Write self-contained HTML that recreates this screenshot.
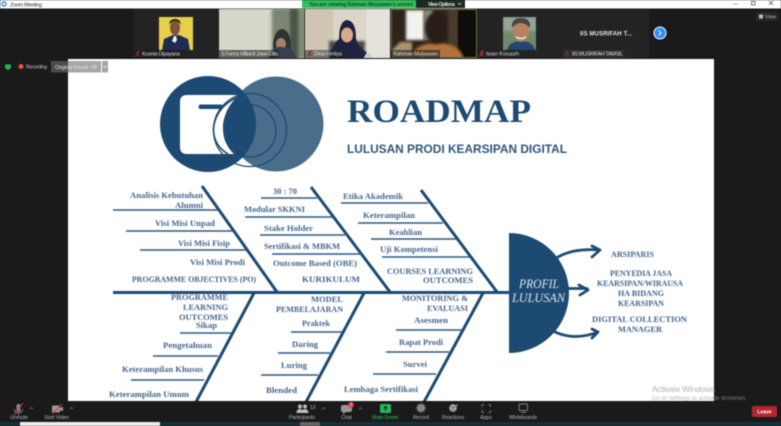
<!DOCTYPE html>
<html><head><meta charset="utf-8"><title>Zoom Meeting</title>
<style>html,body{margin:0;padding:0;background:#1a1a1a;width:781px;height:426px;overflow:hidden}svg{display:block;filter:blur(.45px)}
.s{font-family:"Liberation Serif",serif;font-weight:bold;font-size:8px;fill:#44658a}
.u{font-family:"Liberation Sans",sans-serif;fill:#b8b8b8;font-size:5px}
.n{font-family:"Liberation Sans",sans-serif;fill:#dcdcdc;font-size:5.5px}
.b{stroke:#1d4a72;stroke-width:3;fill:none}.r{stroke:#2d5a80;stroke-width:1.5;fill:none}
.a{stroke:#1d4a72;stroke-width:2.8;fill:none;stroke-linecap:round;stroke-linejoin:round}
</style></head><body>
<svg width="781" height="426" viewBox="0 0 781 426" xmlns="http://www.w3.org/2000/svg">
<defs><filter id="bl" x="-20%" y="-20%" width="140%" height="140%"><feGaussianBlur stdDeviation="1.4"/></filter>
<clipPath id="c1"><rect x="159" y="17" width="34" height="33"/></clipPath>
<clipPath id="c2"><rect x="219" y="9" width="85" height="49"/></clipPath>
<clipPath id="c3"><rect x="305" y="9" width="85" height="49"/></clipPath>
<clipPath id="c4"><rect x="391" y="9" width="85" height="49"/></clipPath>
<clipPath id="c5"><rect x="503" y="17" width="33" height="33"/></clipPath>
</defs>
<rect width="781" height="426" fill="#1a1a1a"/>
<!-- title bar -->
<rect width="781" height="8.5" fill="#fff"/>
<circle cx="4" cy="4" r="2.8" fill="#2d8cff"/><rect x="2.5" y="3" width="3" height="2" fill="#fff"/>
<text x="10" y="6.3" font-family="Liberation Sans" font-size="5.5" fill="#333" textLength="32">Zoom Meeting</text>
<rect x="302" y="0" width="114" height="8" fill="#2fc05c"/>
<text x="309" y="6" font-family="Liberation Sans" font-weight="bold" font-size="5" fill="#0e4a22" textLength="104">You are viewing Rahman Mulyawan's screen</text>
<rect x="416" y="0" width="49" height="8" fill="#1d2a24"/>
<text x="428" y="5.8" font-family="Liberation Sans" font-weight="bold" font-size="5" fill="#e4e4e4" textLength="27">View Options</text>
<path d="M458 3l1.5 1.6L461 3" stroke="#ddd" fill="none" stroke-width=".7"/>
<path d="M733 4h5" stroke="#888" stroke-width=".7"/><rect x="751.5" y="1.5" width="3.5" height="3.5" fill="none" stroke="#555" stroke-width=".8"/><path d="M769 1l4 4M773 1l-4 4" stroke="#444" stroke-width=".7"/>
<!-- thumbs -->
<rect x="133" y="9" width="516" height="49" fill="#232323"/>
<rect x="159" y="17" width="34" height="33" fill="#e6d04c"/>
<g clip-path="url(#c1)"><path d="M162 50l2-11 9-4h6l9 4 2 11z" fill="#1e2c52"/><ellipse cx="175" cy="28" rx="5" ry="7" fill="#7e5636"/><path d="M169 25q6-8 12 0l-1-4q-5-4-10 0z" fill="#2a2320"/><path d="M174 36l-2 5 3 2 2-3-1-4z" fill="#eee"/></g>
<g clip-path="url(#c2)"><rect x="219" y="9" width="85" height="49" fill="#c8ccbe"/><rect x="219" y="9" width="50" height="49" fill="#d6d8cc" filter="url(#bl)"/><path d="M272 9h32v49h-32z" fill="#7a8672" filter="url(#bl)"/><path d="M290 9h8v50h-8z" fill="#4a5548" filter="url(#bl)"/><ellipse cx="282" cy="46" rx="9" ry="17" fill="#2e3436"/><ellipse cx="281" cy="44" rx="5" ry="6" fill="#a38066"/><path d="M268 60q3-14 14-13 12 0 15 13z" fill="#3a4050"/></g>
<g clip-path="url(#c3)"><rect x="305" y="9" width="85" height="49" fill="#dcd6c8"/><rect x="305" y="9" width="28" height="49" fill="#cfc5b2" filter="url(#bl)"/><rect x="366" y="9" width="24" height="49" fill="#e4e2da"/><rect x="329" y="41" width="36" height="17" fill="#4c4c50" filter="url(#bl)"/><path d="M329 59q3-14 10-20 0-18 8-19 9 1 9 18 1 8 13 16l4 6z" fill="#1f2340"/><ellipse cx="347" cy="35" rx="6" ry="7.5" fill="#d8ab8c"/><path d="M367 52l6 7h-10z" fill="#c8ccd8"/></g>
<g clip-path="url(#c4)"><rect x="391" y="9" width="85" height="49" fill="#2d241c"/><rect x="406" y="10" width="18" height="30" fill="#f2f3ee" filter="url(#bl)"/><rect x="424" y="10" width="9" height="30" fill="#8a8a80" filter="url(#bl)"/><rect x="448" y="9" width="10" height="49" fill="#4a3c2c" filter="url(#bl)"/><rect x="458" y="9" width="18" height="49" fill="#0f0c0a"/><path d="M392 50l8-8h12v16h-20z" fill="#a89468" filter="url(#bl)"/><path d="M410 59q4-16 26-16 24 0 28 16z" fill="#b4713a" filter="url(#bl)"/><ellipse cx="436" cy="28" rx="11" ry="16" fill="#2c1e16" filter="url(#bl)"/></g>
<rect x="391.5" y="9.5" width="85" height="48" fill="none" stroke="#67713c" stroke-width="1"/>
<rect x="503" y="17" width="33" height="33" fill="#6f8a6a"/>
<g clip-path="url(#c5)"><rect x="503" y="17" width="33" height="14" fill="#93a49a" filter="url(#bl)"/><path d="M507 50q2-8 12-9h4q10 1 12 9z" fill="#27466e"/><ellipse cx="521" cy="31" rx="8" ry="11" fill="#b5835f"/><path d="M512 28q-1-10 9-10t9 10q-4-5-9-5t-9 5z" fill="#4c4540"/><path d="M516 37q5 3 10 0" stroke="#eee" stroke-width="1.4" fill="none"/></g>
<text x="606" y="35.5" text-anchor="middle" font-family="Liberation Sans" font-weight="bold" font-size="6" fill="#e6e6e6" textLength="52">IIS MUSRIFAH T...</text>
<circle cx="660" cy="33" r="6" fill="#2d8cff" stroke="#fff" stroke-width="1"/><path d="M658.6 30.5l2.5 2.5-2.5 2.5" stroke="#fff" stroke-width="1" fill="none"/>
<!-- name tags -->
<g><path d="M137 51l2 5M139.5 50.5l-4 6" stroke="#d33" stroke-width="1"/><rect x="135" y="50" width="47" height="8" fill="#111" opacity=".3"/><text class="n" x="142" y="55.5" textLength="38">Kusnia Dipayana</text>
<rect x="219" y="50" width="60" height="8" fill="#222" opacity=".65"/><text class="n" x="221" y="55.5" textLength="57">S Fanny Miliardi Jatari Elita</text>
<path d="M309 51l2 5M311.5 50.5l-4 6" stroke="#d33" stroke-width="1"/><rect x="305" y="50" width="40" height="8" fill="#222" opacity=".5"/><text class="n" x="314" y="55.5" textLength="28">Dina Fertiya</text>
<rect x="391" y="50" width="49" height="8" fill="#222" opacity=".65"/><text class="n" x="393" y="55.5" textLength="45">Rahman Mulyawan</text>
<path d="M481 51l2 5M483.5 50.5l-4 6" stroke="#d33" stroke-width="1"/><text class="n" x="486" y="55.5" textLength="33">Iwan Kosasih</text>
<path d="M566 51l2 5M568.5 50.5l-4 6" stroke="#d33" stroke-width="1"/><rect x="563" y="50" width="61" height="8" fill="#333" opacity=".6"/><text class="n" x="572" y="55.5" textLength="51">IIS MUSRIFAH TAMSIL</text></g>
<rect x="756" y="12" width="22" height="9" fill="#262626" rx="1"/><rect x="759" y="14.5" width="4" height="4" fill="#bbb"/><text x="765" y="18.5" font-family="Liberation Sans" font-size="5" fill="#bbb">View</text>
<!-- slide -->
<rect x="68" y="59" width="646" height="342" fill="#fff"/>
<!-- recording -->
<path d="M8 64l3 1v2q0 2-3 3-3-1-3-3v-2z" fill="#27b04e"/>
<circle cx="21" cy="66.5" r="2.5" fill="#e8544a"/><text x="26" y="68.5" font-family="Liberation Sans" font-size="5" fill="#c4c4c4" textLength="21">Recording</text>
<rect x="51" y="61" width="17" height="11.5" fill="#4c4c4c"/><rect x="68" y="61" width="33" height="11.5" fill="#a6a6a6"/><rect x="102" y="61" width="6" height="11.5" fill="#a6a6a6"/>
<text x="55" y="68.8" font-family="Liberation Sans" font-size="5.2" fill="#e4e4e4" textLength="42">Original Sound: Off</text>
<path d="M103.5 66l1.5 1.5 1.5-1.5" stroke="#fff" stroke-width=".6" fill="none"/>
<!-- logo -->
<circle cx="276" cy="124" r="47.5" fill="#4a6d8c"/>
<circle cx="208" cy="124" r="48" fill="#1d4a72"/>
<path d="M187 95H240Q226 105 223 124Q222 143 234 154H187Q180 154 180 147V102Q180 95 187 95Z" fill="#fff"/>
<path d="M201 104.500H222V109H201Q198.500 109 198.500 106.800T201 104.500Z" fill="#1d4a72"/>
<path d="M240 96Q216 106 213.500 128Q213 145 228 154" fill="none" stroke="#1d4a72" stroke-width="1.600"/>
<circle cx="250" cy="130" r="36.500" fill="none" stroke="#1d4a72" stroke-width="1.300"/>
<circle cx="250" cy="131" r="26" fill="none" stroke="#1d4a72" stroke-width="1.300"/>
<text x="347" y="122" font-family="Liberation Serif" font-weight="bold" font-size="33" fill="#1d4a72" textLength="184" lengthAdjust="spacingAndGlyphs">ROADMAP</text>
<text x="347" y="153" font-family="Liberation Sans" font-weight="bold" font-size="12" fill="#2e5578" textLength="220" lengthAdjust="spacingAndGlyphs">LULUSAN PRODI KEARSIPAN DIGITAL</text>
<!-- fishbone -->
<path class="b" d="M113 292.500H510"/>
<path class="b" d="M202 186L277 292M311 187L390 292M421 190L497 292M254 293L196 402M364 293L306 402M483 293L424 402"/>
<path class="r" d="M113 210H218M126 231H232M140 250H246M261 198H317M245 217H333M260 235H345M272 254H363M341 203H428M358 223H443M371 239H456M382 257H470M180 333H231M153 356H218M131 380H204M291 332H342M278 353H330M261 375H318M396 330H462M386 352H449M373 374H436"/>
<g class="s">
<text x="130" y="198" textLength="73" lengthAdjust="spacingAndGlyphs">Analisis Kebutuhan</text><text x="175" y="208" textLength="28" lengthAdjust="spacingAndGlyphs">Alumni</text>
<text x="155" y="226" textLength="60" lengthAdjust="spacingAndGlyphs">Visi Misi Unpad</text><text x="178" y="246" textLength="52" lengthAdjust="spacingAndGlyphs">Visi Misi Fisip</text><text x="190" y="265" textLength="55" lengthAdjust="spacingAndGlyphs">Visi Misi Prodi</text>
<text x="132" y="282" textLength="124" lengthAdjust="spacingAndGlyphs">PROGRAMME OBJECTIVES (PO)</text>
<text x="273" y="194" textLength="24" lengthAdjust="spacingAndGlyphs">30 : 70</text><text x="244" y="212" textLength="61" lengthAdjust="spacingAndGlyphs">Modular SKKNI</text><text x="264" y="231" textLength="49" lengthAdjust="spacingAndGlyphs">Stake Holder</text><text x="264" y="249" textLength="76" lengthAdjust="spacingAndGlyphs">Sertifikasi &amp; MBKM</text><text x="273" y="266" textLength="84" lengthAdjust="spacingAndGlyphs">Outcome Based (OBE)</text><text x="302" y="282" textLength="58" lengthAdjust="spacingAndGlyphs">KURIKULUM</text>
<text x="343" y="199" textLength="60" lengthAdjust="spacingAndGlyphs">Etika Akademik</text><text x="363" y="218" textLength="52" lengthAdjust="spacingAndGlyphs">Keterampilan</text><text x="389" y="235" textLength="33" lengthAdjust="spacingAndGlyphs">Keahlian</text><text x="380" y="252" textLength="58" lengthAdjust="spacingAndGlyphs">Uji Kompetensi</text><text x="387" y="274" textLength="86" lengthAdjust="spacingAndGlyphs">COURSES LEARNING</text><text x="423" y="283" textLength="50" lengthAdjust="spacingAndGlyphs">OUTCOMES</text>
<text x="171" y="300" textLength="57" lengthAdjust="spacingAndGlyphs">PROGRAMME</text><text x="183" y="310" textLength="45" lengthAdjust="spacingAndGlyphs">LEARNING</text><text x="179" y="320" textLength="49" lengthAdjust="spacingAndGlyphs">OUTCOMES</text><text x="196" y="328" textLength="21" lengthAdjust="spacingAndGlyphs">Sikap</text><text x="163" y="348" textLength="49" lengthAdjust="spacingAndGlyphs">Pengetahuan</text><text x="122" y="372" textLength="81" lengthAdjust="spacingAndGlyphs">Keterampilan Khusus</text><text x="109" y="397" textLength="80" lengthAdjust="spacingAndGlyphs">Keterampilan Umum</text>
<text x="311" y="302" textLength="32" lengthAdjust="spacingAndGlyphs">MODEL</text><text x="276" y="312" textLength="67" lengthAdjust="spacingAndGlyphs">PEMBELAJARAN</text><text x="302" y="326" textLength="28" lengthAdjust="spacingAndGlyphs">Praktek</text><text x="292" y="347" textLength="26" lengthAdjust="spacingAndGlyphs">Daring</text><text x="281" y="368" textLength="26" lengthAdjust="spacingAndGlyphs">Luring</text><text x="266" y="393" textLength="31" lengthAdjust="spacingAndGlyphs">Blended</text>
<text x="402" y="301" textLength="66" lengthAdjust="spacingAndGlyphs">MONITORING &amp;</text><text x="427" y="311" textLength="41" lengthAdjust="spacingAndGlyphs">EVALUASI</text><text x="414" y="323" textLength="34" lengthAdjust="spacingAndGlyphs">Asesmen</text><text x="399" y="345" textLength="44" lengthAdjust="spacingAndGlyphs">Rapat Prodi</text><text x="403" y="367" textLength="24" lengthAdjust="spacingAndGlyphs">Survei</text><text x="344" y="392" textLength="74" lengthAdjust="spacingAndGlyphs">Lembaga Sertifikasi</text>
<text x="611" y="257" textLength="43" lengthAdjust="spacingAndGlyphs">ARSIPARIS</text><text x="610" y="276" textLength="62" lengthAdjust="spacingAndGlyphs">PENYEDIA JASA</text><text x="597" y="286" textLength="86" lengthAdjust="spacingAndGlyphs">KEARSIPAN/WIRAUSA</text><text x="618" y="296" textLength="46" lengthAdjust="spacingAndGlyphs">HA BIDANG</text><text x="618" y="306" textLength="46" lengthAdjust="spacingAndGlyphs">KEARSIPAN</text><text x="592" y="322" textLength="95" lengthAdjust="spacingAndGlyphs">DIGITAL COLLECTION</text><text x="618" y="332" textLength="44" lengthAdjust="spacingAndGlyphs">MANAGER</text>
</g>
<path d="M509 233A60 60 0 0 1 509 353Z" fill="#1d4a72"/>
<text x="519" y="288" font-family="Liberation Serif" font-style="italic" font-size="12.5" fill="#dfe6ec" textLength="40" lengthAdjust="spacingAndGlyphs">PROFIL</text>
<text x="512" y="302" font-family="Liberation Serif" font-style="italic" font-size="12.5" fill="#dfe6ec" textLength="53" lengthAdjust="spacingAndGlyphs">LULUSAN</text>
<path class="a" d="M558 257Q574 248 599 250M592 246L600 250L592 257"/>
<path class="a" d="M565 288.500H587M579 285L588 290L580 295"/>
<path class="a" d="M555 332Q575 341 598 332M592 329L598 332L592 338"/>
<!-- activate -->
<text x="652" y="392" font-family="Liberation Sans" font-size="8.5" fill="#9a9a9a" opacity=".75" textLength="63">Activate Windows</text>
<text x="652" y="400" font-family="Liberation Sans" font-size="6" fill="#9a9a9a" opacity=".75" textLength="95">Go to Settings to activate Windows.</text>
<!-- toolbar -->
<rect x="0" y="401" width="781" height="21" fill="#1a1a1a"/>
<rect x="0" y="422" width="781" height="4" fill="#14303a"/><rect x="20" y="422" width="140" height="4" fill="#eee"/><rect x="300" y="422" width="20" height="4" fill="#666"/>
<rect x="16.5" y="404" width="4" height="8" rx="2" fill="#888"/><path d="M14.5 409q0 4 4 4t4-4M18.5 413v2" stroke="#888" fill="none" stroke-width=".8"/><path d="M14 415l9-12" stroke="#d6333a" stroke-width="1"/>
<text class="u" x="19" y="419" text-anchor="middle">Unmute</text><path d="M30 409l1.5-1.5L33 409" stroke="#888" fill="none" stroke-width=".6"/>
<rect x="52" y="405.5" width="8" height="7" rx="1" fill="#999"/><path d="M60 408l3-1.5v5l-3-1.500z" fill="#999"/><path d="M52 414l10-10" stroke="#d6333a" stroke-width="1"/>
<text class="u" x="56.5" y="419" text-anchor="middle">Start Video</text><path d="M70 409l1.5-1.5L73 409" stroke="#888" fill="none" stroke-width=".6"/>
<circle cx="300" cy="406.5" r="2" fill="#bbb"/><circle cx="305" cy="406.5" r="2" fill="#bbb"/><path d="M296.5 413q0-4 3.5-4t3.5 4zM302 413q0-4 3-4t3.5 4z" fill="#bbb"/><text x="310" y="409" font-family="Liberation Sans" font-size="5" fill="#bbb">13</text>
<text class="u" x="302" y="419" text-anchor="middle">Participants</text><path d="M322 409l1.5-1.5L325 409" stroke="#888" fill="none" stroke-width=".6"/>
<path d="M343 405h7q2 0 2 2v3q0 2-2 2h-4l-3 2v-2q-2 0-2-2v-3q0-2 2-2z" fill="#999"/><circle cx="351" cy="405" r="3" fill="#e8383f"/><text x="349.8" y="407" font-family="Liberation Sans" font-size="5" fill="#fff">7</text>
<text class="u" x="346.5" y="419" text-anchor="middle">Chat</text><path d="M359 409l1.5-1.5L362 409" stroke="#888" fill="none" stroke-width=".6"/>
<rect x="380" y="404" width="11" height="9" rx="1.5" fill="#27b554"/><path d="M385.5 411v-4M383.5 408.5l2-2 2 2" stroke="#103" fill="none" stroke-width=".8"/>
<text x="385" y="419" text-anchor="middle" font-family="Liberation Sans" font-size="5" fill="#2fbf5b" textLength="27">Share Screen</text>
<circle cx="421" cy="408" r="4" fill="#888"/><circle cx="421" cy="408" r="4.8" fill="none" stroke="#666" stroke-width=".5"/>
<text class="u" x="421" y="419" text-anchor="middle">Record</text>
<circle cx="453" cy="408" r="3.8" fill="#aaa"/><circle cx="451.7" cy="407.2" r=".6" fill="#222"/><circle cx="454.3" cy="407.2" r=".6" fill="#222"/><path d="M451.5 409q1.500 1.500 3 0" stroke="#222" stroke-width=".5" fill="none"/><path d="M457 404v2.500M455.8 405.2h2.400" stroke="#aaa" stroke-width=".5"/>
<text class="u" x="453" y="419" text-anchor="middle">Reactions</text>
<path d="M482 407v-2.500h2.500M488 404.500h2.500v2.500M490.500 410v2.500h-2.500M484.500 412.500h-2.500v-2.500" stroke="#aaa" fill="none" stroke-width=".6"/>
<text class="u" x="486" y="419" text-anchor="middle">Apps</text>
<rect x="519" y="404" width="8.5" height="6.5" rx="1" fill="none" stroke="#aaa" stroke-width=".7"/><path d="M521 412.500h5" stroke="#aaa" stroke-width=".7"/>
<text class="u" x="523" y="419" text-anchor="middle">Whiteboards</text>
<rect x="752" y="406" width="25" height="11" rx="2" fill="#b3262e"/><text x="764.5" y="413.5" text-anchor="middle" font-family="Liberation Sans" font-weight="bold" font-size="5" fill="#fff">Leave</text>
</svg>
</body></html>
